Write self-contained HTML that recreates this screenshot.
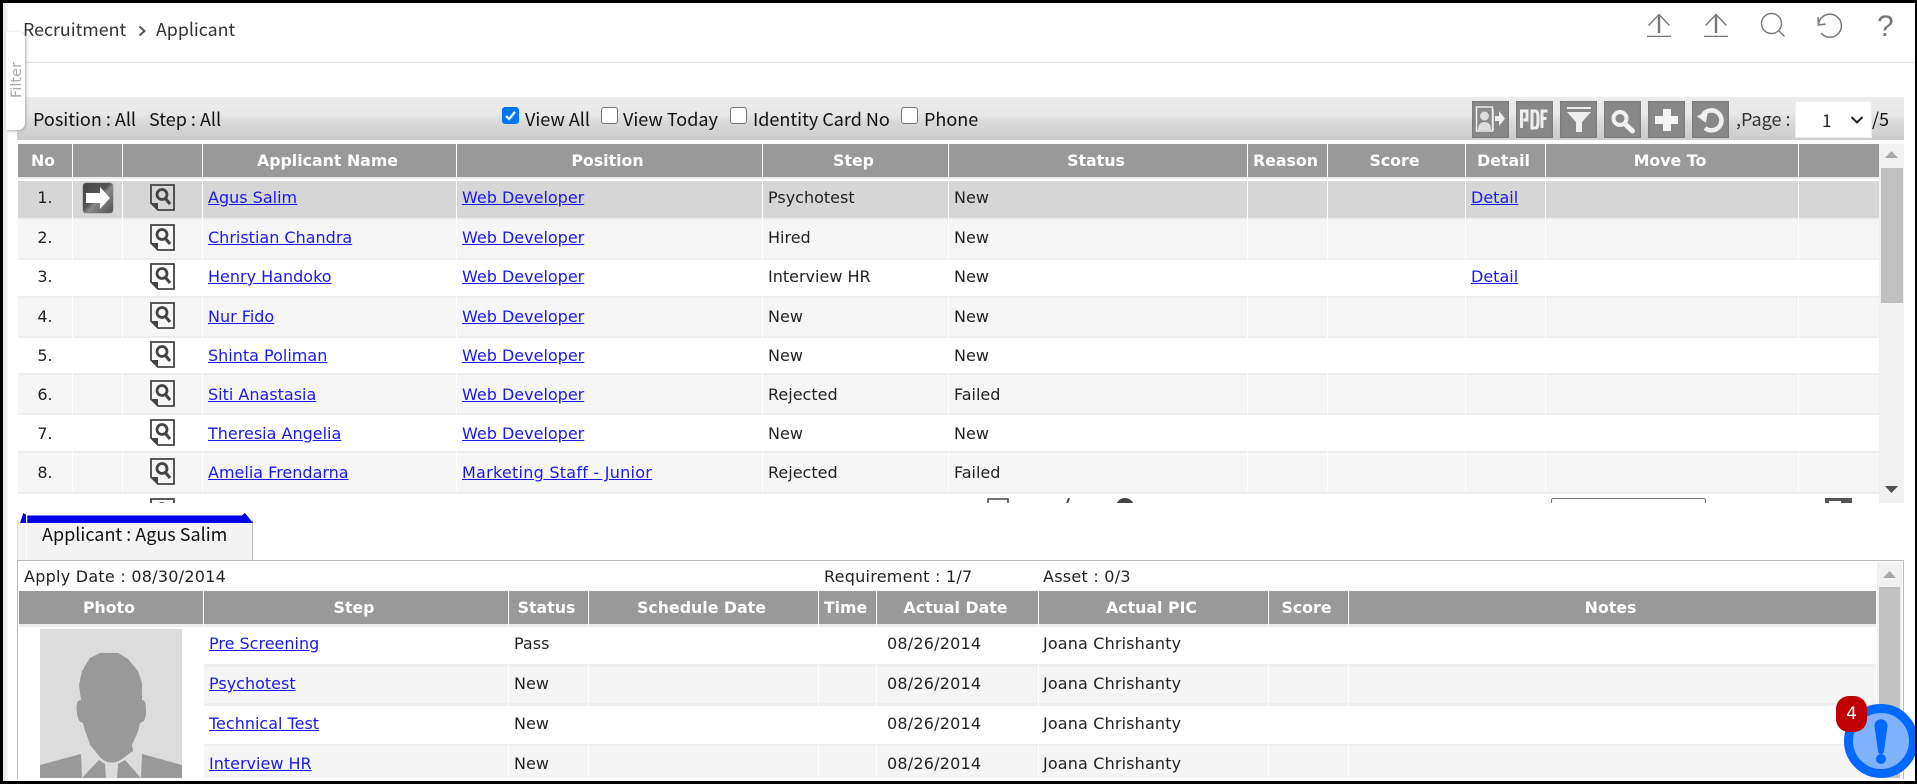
<!DOCTYPE html>
<html><head><meta charset="utf-8"><title>Applicant</title>
<style>
*{box-sizing:border-box}
html,body{margin:0;padding:0;background:#fff}
body{position:relative;width:1917px;height:784px;overflow:hidden;font:16px/20px "DejaVu Sans",sans-serif;color:#222}
.a{position:absolute}
.t{position:absolute;white-space:nowrap;line-height:20px}
.s{font-family:"Noto Sans CJK SC","Liberation Sans",sans-serif;color:#222}
a{color:#1a1aee;text-decoration:underline}
.h{position:absolute;color:#fff;font-weight:bold;font-size:15.8px;text-indent:-4px;text-align:center;line-height:33px;height:33px;background:#999;white-space:nowrap}
.b{position:absolute;top:101px;width:37px;height:37px;background:#888;box-shadow:inset 0 0 2px #666}
.b svg{position:absolute;left:0;top:0}
.v{position:absolute;width:1px;background:#fff}
.hl{position:absolute;height:2px;background:#eee}
.cb{position:absolute;width:17px;height:17px;top:107px;border:1px solid #767676;border-radius:3px;background:#fff}
</style></head><body>
<svg width="0" height="0" style="position:absolute"><defs>
<symbol id="doc" viewBox="0 0 25 27"><path d="M1 1H24V26H8L1 19Z" fill="none" stroke="#444" stroke-width="1.8"/><path d="M1 19H8V26Z" fill="#444"/><circle cx="12" cy="10.5" r="5" fill="none" stroke="#444" stroke-width="2.8"/><path d="M15.5 14.5L20 20" stroke="#444" stroke-width="3"/></symbol>
<symbol id="up" viewBox="0 0 24 24"><path d="M0 23.5H24" stroke="#777" stroke-width="1.4"/><path d="M12 20V2M1.5 12.5L12 1.5L22.5 12.5" fill="none" stroke="#777" stroke-width="1.4"/><path d="M12 4V20" stroke="#777" stroke-width="2.4"/></symbol>
</defs></svg>

<!-- top -->
<div class="a" style="left:3px;top:0;width:5px;height:784px;background:linear-gradient(90deg,#e6e6e6,#f8f8f8)"></div>
<div class="t s" style="left:23px;top:18px;font-size:17.8px;line-height:22px;color:#333">Recruitment</div>
<svg class="a" style="left:137px;top:25px" width="10" height="12"><path d="M2.5 1.5L7.5 6L2.5 10.500" fill="none" stroke="#555" stroke-width="2"/></svg>
<div class="t s" style="left:156px;top:18px;font-size:17.8px;line-height:22px;color:#333">Applicant</div>
<div class="a" style="left:25px;top:62px;width:1890px;height:1px;background:#ddd"></div>

<svg class="a" style="left:1647px;top:13px" width="24" height="24"><use href="#up"/></svg>
<svg class="a" style="left:1704px;top:13px" width="24" height="24"><use href="#up"/></svg>
<svg class="a" style="left:1760px;top:12px" width="26" height="26"><circle cx="11.500" cy="11.500" r="10" fill="none" stroke="#777" stroke-width="1.4"/><path d="M18.500 18.500L24.500 24.500" stroke="#777" stroke-width="1.4"/></svg>
<svg class="a" style="left:1816px;top:12px" width="28" height="26"><path d="M2.500 12A11.500 11.500 0 1 1 5 21" fill="none" stroke="#777" stroke-width="1.5"/><path d="M2 5L2.500 13L9.500 12" fill="none" stroke="#777" stroke-width="1.5"/></svg>
<div class="t" style="left:1877px;top:13px;font:30px/28px 'Liberation Sans',sans-serif;color:#777">?</div>

<!-- toolbar -->
<div class="a" style="left:17px;top:97px;width:1887px;height:43px;background:linear-gradient(180deg,#ececec 0%,#e8e8e8 40%,#d8d8d8 60%,#cdcdcd 100%)"></div>
<div class="t s" style="left:33px;top:109px;font-size:18px;color:#111">Position : All</div>
<div class="t s" style="left:149px;top:109px;font-size:18px;color:#111">Step : All</div>
<div class="cb" style="left:502px;background:#0075ff;border-color:#0075ff"><svg style="position:absolute;left:0;top:0" width="15" height="15"><path d="M3 8L6.200 11L12 3.800" fill="none" stroke="#fff" stroke-width="2.200"/></svg></div>
<div class="t s" style="left:525px;top:109px;font-size:18px;color:#111">View All</div>
<div class="cb" style="left:601px"></div>
<div class="t s" style="left:623px;top:109px;font-size:18px;color:#111">View Today</div>
<div class="cb" style="left:730px"></div>
<div class="t s" style="left:753px;top:109px;font-size:18px;color:#111">Identity Card No</div>
<div class="cb" style="left:901px"></div>
<div class="t s" style="left:924px;top:109px;font-size:18px;color:#111">Phone</div>

<div class="b" style="left:1472px"><svg width="37" height="37"><rect x="7" y="9" width="14" height="20" fill="none" stroke="#eee" stroke-width="1.500"/><rect x="4.500" y="6" width="16" height="24" fill="#888" stroke="#eee" stroke-width="1.500"/><circle cx="12.500" cy="15" r="4.500" fill="#ddd"/><path d="M6 29C6 23 9 21 12.500 21S19 23 19 29Z" fill="#ddd"/><path d="M23 15H27V10L33 17.500L27 25V20H23Z" fill="#eee"/></svg></div>
<div class="b" style="left:1516px"><svg width="37" height="37"><path d="M6 27V10H11.500V19H8M16.500 27V10H20C22 10 22.500 12 22.500 18.500S22 27 20 27ZM26.500 27V10H32M26.500 17.500H31" transform="translate(-.5 0)" fill="none" stroke="#eee" stroke-width="3"/></svg></div>
<div class="b" style="left:1560px"><svg width="37" height="37"><path d="M7 7H31" stroke="#eee" stroke-width="2"/><path d="M7 11H31L22 21V31H16V21Z" fill="#eee"/></svg></div>
<div class="b" style="left:1604px"><svg width="37" height="37"><circle cx="16" cy="17.500" r="6.500" fill="none" stroke="#f2f2f2" stroke-width="4"/><path d="M21 23L28.500 30" stroke="#f2f2f2" stroke-width="5" stroke-linecap="round"/></svg></div>
<div class="b" style="left:1648px"><svg width="37" height="37"><path d="M7 15H15V8H23V15H30V23H23V30H15V23H7Z" fill="#f4f4f4"/></svg></div>
<div class="b" style="left:1692px"><svg width="37" height="37"><path d="M11 14A10 10 0 1 1 13 27" fill="none" stroke="#f0f0f0" stroke-width="4.500"/><path d="M5 16L15 9V21Z" fill="#f0f0f0" transform="rotate(10 10 15)"/></svg></div>
<div class="t s" style="left:1736px;top:109px;font-size:18px;color:#333">,Page :</div>
<div class="a" style="left:1795px;top:101px;width:77px;height:37px;background:#fff;border:1px solid #eee"></div>
<div class="t s" style="left:1822px;top:110px;font-size:17.2px;color:#222">1</div>
<svg class="a" style="left:1850px;top:115px" width="14" height="10"><path d="M1.500 2L7 7.500L12.500 2" fill="none" stroke="#222" stroke-width="2"/></svg>
<div class="t s" style="left:1872px;top:109px;font-size:18px;color:#111">/5</div>

<!-- Filter tab -->
<div class="a" style="left:6px;top:32px;width:19px;height:98px;background:#fff;border-radius:0 7px 7px 0;box-shadow:1px 1px 3px #aaa"></div>
<div class="t" style="left:-8px;top:71px;width:50px;text-align:center;font-size:14.5px;line-height:18px;color:#aaa;transform:rotate(-90deg)">Filter</div>

<!-- grid -->
<div class="a" style="left:18px;top:144px;width:1861px;height:359px;overflow:hidden">
<div class="a" style="left:0;top:37px;width:1861px;height:37px;background:#d6d6d6"></div>
<div class="a" style="left:0;top:76px;width:1861px;height:38px;background:#f6f6f6"></div>
<div class="a" style="left:0;top:154px;width:1861px;height:38px;background:#f6f6f6"></div>
<div class="a" style="left:0;top:231px;width:1861px;height:38px;background:#f6f6f6"></div>
<div class="a" style="left:0;top:309px;width:1861px;height:39px;background:#f6f6f6"></div>
<div class="hl" style="left:0;top:33px;width:1861px"></div>
<div class="hl" style="left:0;top:74px;width:1861px"></div>
<div class="hl" style="left:0;top:114px;width:1861px"></div>
<div class="hl" style="left:0;top:152px;width:1861px"></div>
<div class="hl" style="left:0;top:192px;width:1861px"></div>
<div class="hl" style="left:0;top:229px;width:1861px"></div>
<div class="hl" style="left:0;top:269px;width:1861px"></div>
<div class="hl" style="left:0;top:307px;width:1861px"></div>
<div class="hl" style="left:0;top:348px;width:1861px"></div>
<div class="h" style="left:0;top:0;width:1861px"></div>
<div class="v" style="left:54px;top:0;height:348px"></div><div class="v" style="left:104px;top:0;height:348px"></div><div class="v" style="left:184px;top:0;height:348px"></div><div class="v" style="left:438px;top:0;height:348px"></div><div class="v" style="left:744px;top:0;height:348px"></div><div class="v" style="left:930px;top:0;height:348px"></div><div class="v" style="left:1229px;top:0;height:348px"></div><div class="v" style="left:1309px;top:0;height:348px"></div><div class="v" style="left:1447px;top:0;height:348px"></div><div class="v" style="left:1527px;top:0;height:348px"></div><div class="v" style="left:1780px;top:0;height:348px"></div>
<div class="h" style="left:0;top:0;width:54px;background:none">No</div>
<div class="h" style="left:185px;top:0;width:253px;background:none">Applicant Name</div>
<div class="h" style="left:439px;top:0;width:305px;background:none">Position</div>
<div class="h" style="left:745px;top:0;width:185px;background:none">Step</div>
<div class="h" style="left:931px;top:0;width:298px;background:none">Status</div>
<div class="h" style="left:1230px;top:0;width:79px;background:none">Reason</div>
<div class="h" style="left:1310px;top:0;width:137px;background:none">Score</div>
<div class="h" style="left:1448px;top:0;width:79px;background:none">Detail</div>
<div class="h" style="left:1528px;top:0;width:252px;background:none">Move To</div>

<div class="a" style="left:65px;top:39px;width:30px;height:30px;border-radius:3px;background:linear-gradient(135deg,#444 0%,#555 45%,#888 55%,#555 100%);box-shadow:0 0 1px #333"><svg width="30" height="30"><path d="M3 10H17V4L27 15L17 26V20H3Z" fill="#fff"/></svg></div>

<svg class="a" style="left:132px;top:40px" width="25" height="27"><use href="#doc"/></svg>
<svg class="a" style="left:132px;top:80px" width="25" height="27"><use href="#doc"/></svg>
<svg class="a" style="left:132px;top:119px" width="25" height="27"><use href="#doc"/></svg>
<svg class="a" style="left:132px;top:158px" width="25" height="27"><use href="#doc"/></svg>
<svg class="a" style="left:132px;top:197px" width="25" height="27"><use href="#doc"/></svg>
<svg class="a" style="left:132px;top:236px" width="25" height="27"><use href="#doc"/></svg>
<svg class="a" style="left:132px;top:275px" width="25" height="27"><use href="#doc"/></svg>
<svg class="a" style="left:132px;top:314px" width="25" height="27"><use href="#doc"/></svg>
<svg class="a" style="left:132px;top:354px" width="25" height="27"><use href="#doc"/></svg>
<svg class="a" style="left:969px;top:354px" width="22" height="27"><rect x="1" y="1" width="20" height="22" fill="none" stroke="#444" stroke-width="1.500"/></svg>
<div class="a" style="left:1049px;top:354px;width:2px;height:6px;background:#444;transform:rotate(20deg)"></div>
<div class="a" style="left:1098px;top:354px;width:18px;height:18px;border-radius:50%;background:#444"></div>
<div class="a" style="left:1533px;top:354px;width:155px;height:20px;border:1px solid #777;border-radius:2px"></div>
<div class="a" style="left:1807px;top:354px;width:27px;height:20px;background:#555"></div>
<div class="a" style="left:1811px;top:357px;width:12px;height:4px;background:#fff"></div>

<div class="t" style="left:0;top:44px;width:54px;text-align:center">1.</div>
<div class="t" style="left:190px;top:44px"><a>Agus Salim</a></div><div class="t" style="left:444px;top:44px"><a>Web Developer</a></div><div class="t" style="left:750px;top:44px">Psychotest</div><div class="t" style="left:936px;top:44px">New</div><div class="t" style="left:1453px;top:44px"><a>Detail</a></div>

<div class="t" style="left:0;top:84px;width:54px;text-align:center">2.</div>
<div class="t" style="left:190px;top:84px"><a>Christian Chandra</a></div><div class="t" style="left:444px;top:84px"><a>Web Developer</a></div><div class="t" style="left:750px;top:84px">Hired</div><div class="t" style="left:936px;top:84px">New</div>

<div class="t" style="left:0;top:123px;width:54px;text-align:center">3.</div>
<div class="t" style="left:190px;top:123px"><a>Henry Handoko</a></div><div class="t" style="left:444px;top:123px"><a>Web Developer</a></div><div class="t" style="left:750px;top:123px">Interview HR</div><div class="t" style="left:936px;top:123px">New</div><div class="t" style="left:1453px;top:123px"><a>Detail</a></div>

<div class="t" style="left:0;top:163px;width:54px;text-align:center">4.</div>
<div class="t" style="left:190px;top:163px"><a>Nur Fido</a></div><div class="t" style="left:444px;top:163px"><a>Web Developer</a></div><div class="t" style="left:750px;top:163px">New</div><div class="t" style="left:936px;top:163px">New</div>

<div class="t" style="left:0;top:202px;width:54px;text-align:center">5.</div>
<div class="t" style="left:190px;top:202px"><a>Shinta Poliman</a></div><div class="t" style="left:444px;top:202px"><a>Web Developer</a></div><div class="t" style="left:750px;top:202px">New</div><div class="t" style="left:936px;top:202px">New</div>

<div class="t" style="left:0;top:241px;width:54px;text-align:center">6.</div>
<div class="t" style="left:190px;top:241px"><a>Siti Anastasia</a></div><div class="t" style="left:444px;top:241px"><a>Web Developer</a></div><div class="t" style="left:750px;top:241px">Rejected</div><div class="t" style="left:936px;top:241px">Failed</div>

<div class="t" style="left:0;top:280px;width:54px;text-align:center">7.</div>
<div class="t" style="left:190px;top:280px"><a>Theresia Angelia</a></div><div class="t" style="left:444px;top:280px"><a>Web Developer</a></div><div class="t" style="left:750px;top:280px">New</div><div class="t" style="left:936px;top:280px">New</div>

<div class="t" style="left:0;top:319px;width:54px;text-align:center">8.</div>
<div class="t" style="left:190px;top:319px"><a>Amelia Frendarna</a></div><div class="t" style="left:444px;top:319px;letter-spacing:.25px"><a>Marketing Staff - Junior</a></div><div class="t" style="left:750px;top:319px">Rejected</div><div class="t" style="left:936px;top:319px">Failed</div>
</div>

<!-- grid scrollbar -->
<div class="a" style="left:1879px;top:144px;width:25px;height:359px;background:#f1f1f1"></div>
<div class="a" style="left:1881px;top:168px;width:22px;height:135px;background:#c0c0c0"></div>
<svg class="a" style="left:1885px;top:151px" width="13" height="8"><path d="M0 7L6.500 0L13 7Z" fill="#a8a8a8"/></svg>
<svg class="a" style="left:1885px;top:486px" width="13" height="8"><path d="M0 0L6.500 7L13 0Z" fill="#505050"/></svg>

<!-- tab -->
<div class="a" style="left:17px;top:520px;width:236px;height:40px;background:#f4f4f4;border-right:1px solid #bbb;border-left:1px solid #ddd"></div>
<div class="a" style="left:26px;top:523px;width:1px;height:37px;background:#fff"></div>
<svg class="a" style="left:15px;top:513px" width="243" height="11"><path d="M5 10L8.300 0L11 1.700V10ZM12.300 2.500H226.700L230 0L238 10H12.300Z" fill="#0000e6"/></svg>
<div class="t s" style="left:42px;top:524px;font-size:18px;color:#111">Applicant : Agus Salim</div>

<!-- panel -->
<div class="a" style="left:17px;top:560px;width:1887px;height:219px;border:1px solid #bbb;border-bottom:0;background:#fff"></div>
<div class="t" style="left:24px;top:567px;letter-spacing:.25px">Apply Date : 08/30/2014</div>
<div class="t" style="left:824px;top:567px;letter-spacing:.25px">Requirement : 1/7</div>
<div class="t" style="left:1043px;top:567px;letter-spacing:.25px">Asset : 0/3</div>

<div class="a" style="left:19px;top:591px;width:1857px;height:187px;overflow:hidden">
<div class="hl" style="left:0;top:33px;width:1857px;height:3px"></div>
<div class="a" style="left:185px;top:76px;width:1672px;height:36px;background:#f5f5f5"></div>
<div class="a" style="left:185px;top:155px;width:1672px;height:32px;background:#f5f5f5"></div>
<div class="hl" style="left:185px;top:73px;width:1672px;height:3px"></div>
<div class="hl" style="left:185px;top:112px;width:1672px;height:3px"></div>
<div class="hl" style="left:185px;top:153px;width:1672px;height:2px"></div>
<div class="h" style="left:0;top:0;width:1857px"></div>
<div class="v" style="left:184px;top:0;height:187px"></div><div class="v" style="left:489px;top:0;height:187px"></div><div class="v" style="left:569px;top:0;height:187px"></div><div class="v" style="left:799px;top:0;height:187px"></div><div class="v" style="left:857px;top:0;height:187px"></div><div class="v" style="left:1019px;top:0;height:187px"></div><div class="v" style="left:1249px;top:0;height:187px"></div><div class="v" style="left:1329px;top:0;height:187px"></div>
<div class="h" style="left:0;top:0;width:184px;background:none">Photo</div>
<div class="h" style="left:185px;top:0;width:304px;background:none">Step</div>
<div class="h" style="left:490px;top:0;width:79px;background:none">Status</div>
<div class="h" style="left:570px;top:0;width:229px;background:none">Schedule Date</div>
<div class="h" style="left:800px;top:0;width:57px;background:none">Time</div>
<div class="h" style="left:858px;top:0;width:161px;background:none">Actual Date</div>
<div class="h" style="left:1020px;top:0;width:229px;background:none">Actual PIC</div>
<div class="h" style="left:1250px;top:0;width:79px;background:none">Score</div>
<div class="h" style="left:1330px;top:0;width:527px;background:none">Notes</div>

<svg class="a" style="left:21px;top:38px" width="142" height="149"><rect width="142" height="149" fill="#dcdcdc"/>
<path d="M60 24L78 24L88 30L98 42L102 54L102 71C105 71 106 75 106 82C106 90 104 93 100 94C98 106 93 112 92 116L93 122L82 130C76 135 66 135 60 128L50 116C49 110 45 104 43 94C40 93 38 92 37 84C36 78 36 71 41 71L39 56L42 42L50 29Z" fill="#999"/>
<path d="M0 136L41 125L42 149H0ZM142 136L102 125L101 149H142Z" fill="#999"/>
<path d="M42 149L59 131L65 135L66 149ZM101 149L85 131L78 135L77 149Z" fill="#999"/></svg>

<div class="t" style="left:190px;top:43px"><a>Pre Screening</a></div><div class="t" style="left:495px;top:43px">Pass</div><div class="t" style="left:868px;top:43px;letter-spacing:.2px">08/26/2014</div><div class="t" style="left:1024px;top:43px;letter-spacing:.15px">Joana Chrishanty</div>
<div class="t" style="left:190px;top:83px"><a>Psychotest</a></div><div class="t" style="left:495px;top:83px">New</div><div class="t" style="left:868px;top:83px;letter-spacing:.2px">08/26/2014</div><div class="t" style="left:1024px;top:83px;letter-spacing:.15px">Joana Chrishanty</div>
<div class="t" style="left:190px;top:123px"><a>Technical Test</a></div><div class="t" style="left:495px;top:123px">New</div><div class="t" style="left:868px;top:123px;letter-spacing:.2px">08/26/2014</div><div class="t" style="left:1024px;top:123px;letter-spacing:.15px">Joana Chrishanty</div>
<div class="t" style="left:190px;top:163px"><a>Interview HR</a></div><div class="t" style="left:495px;top:163px">New</div><div class="t" style="left:868px;top:163px;letter-spacing:.2px">08/26/2014</div><div class="t" style="left:1024px;top:163px;letter-spacing:.15px">Joana Chrishanty</div>
</div>

<!-- panel scrollbar -->
<div class="a" style="left:1877px;top:562px;width:25px;height:216px;background:#f1f1f1"></div>
<div class="a" style="left:1879px;top:587px;width:21px;height:191px;background:#c0c0c0"></div>
<svg class="a" style="left:1883px;top:571px" width="13" height="8"><path d="M0 7L6.500 0L13 7Z" fill="#a8a8a8"/></svg>

<!-- floating -->
<svg class="a" style="left:1844px;top:704px" width="73" height="74"><circle cx="37" cy="37" r="32.500" fill="#80b2ff" stroke="#0069ff" stroke-width="9"/><path d="M30.500 22C30.500 13 43.500 13 43.500 22L40 47C39.500 51 34.500 51 34 47Z" fill="#0069ff"/><circle cx="37" cy="55" r="5" fill="#0069ff"/></svg>
<div class="a" style="left:1836px;top:696px;width:31px;height:36px;border-radius:13px;background:#c00000;color:#fff;text-align:center;font:17px/36px 'DejaVu Sans',sans-serif">4</div>

<!-- black frame -->
<div class="a" style="left:0;top:0;width:1917px;height:3px;background:#000"></div>
<div class="a" style="left:0;top:781px;width:1917px;height:3px;background:#000"></div>
<div class="a" style="left:0;top:0;width:3px;height:784px;background:#000"></div>
<div class="a" style="left:1915px;top:0;width:2px;height:784px;background:#000"></div>
</body></html>
